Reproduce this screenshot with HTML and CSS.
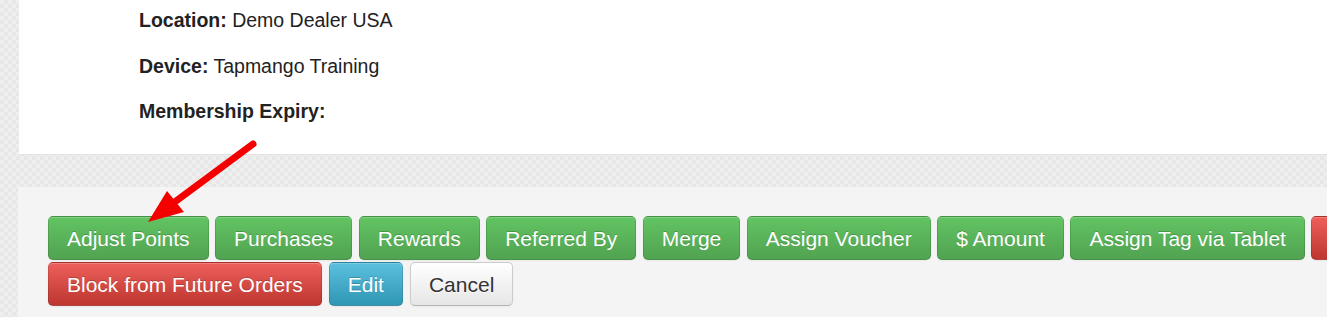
FILE: index.html
```html
<!DOCTYPE html>
<html>
<head>
<meta charset="utf-8">
<link rel="stylesheet" href="styles.css">
</head>
<body>
<div class="page">
  <section class="info-panel">
    <p class="info-line"><b>Location:</b> Demo Dealer USA</p>
    <p class="info-line"><b>Device:</b> Tapmango Training</p>
    <p class="info-line"><b>Membership Expiry:</b></p>
  </section>
  <section class="action-panel">
    <div class="btn-row">
      <button class="btn btn-success">Adjust Points</button>
      <button class="btn btn-success">Purchases</button>
      <button class="btn btn-success">Rewards</button>
      <button class="btn btn-success">Referred By</button>
      <button class="btn btn-success">Merge</button>
      <button class="btn btn-success">Assign Voucher</button>
      <button class="btn btn-success">$ Amount</button>
      <button class="btn btn-success">Assign Tag via Tablet</button>
      <button class="btn btn-danger">Delete</button>
    </div>
    <div class="btn-row">
      <button class="btn btn-danger">Block from Future Orders</button>
      <button class="btn btn-info">Edit</button>
      <button class="btn btn-default">Cancel</button>
    </div>
  </section>
</div>
<svg class="arrow" width="1327" height="317" viewBox="0 0 1327 317">
  <line x1="253" y1="144" x2="172" y2="204" stroke="#f50000" stroke-width="7" stroke-linecap="round"/>
  <polygon points="148,222 167,191 184,212" fill="#f50000"/>
</svg>
</body>
</html>
```

FILE: styles.css
```css
html, body {
  margin: 0;
  padding: 0;
}
body {
  width: 1327px;
  height: 317px;
  overflow: hidden;
  position: relative;
  font-family: "Liberation Sans", Arial, sans-serif;
  color: #222;
  background-color: #eeeeee;
  background-image:
    linear-gradient(45deg, #e7e7e7 25%, transparent 25%, transparent 75%, #e7e7e7 75%),
    linear-gradient(45deg, #e7e7e7 25%, transparent 25%, transparent 75%, #e7e7e7 75%);
  background-size: 8px 8px;
  background-position: 0 0, 4px 4px;
}
.page {
  margin-left: 18px;
  display: flex;
  flex-direction: column;
}
.info-panel {
  background: #fff;
  height: 155px;
  box-sizing: border-box;
  padding: 6px 0 0 120px;
  margin-left: 1px;
  border-bottom: 1px solid #e2e2e2;
  margin-bottom: 32px;
}
.info-line {
  margin: 0 0 17.5px 0;
  font-size: 19.5px;
  line-height: 28px;
}
.info-line b {
  font-weight: bold;
}
.action-panel {
  background: #f4f4f4;
  height: 130px;
  padding: 29px 0 0 30px;
  display: flex;
  flex-direction: column;
  gap: 2px;
}
.btn-row {
  display: flex;
  gap: 6.5px;
  flex-wrap: nowrap;
}
.btn-row + .btn-row {
  gap: 7px;
}
.btn {
  flex: none;
  font-family: "Liberation Sans", Arial, sans-serif;
  font-size: 21px;
  line-height: 28px;
  padding: 8px 18px 6px;
  border: 1px solid rgba(0,0,0,0.12);
  border-bottom-color: rgba(0,0,0,0.25);
  border-radius: 5px;
  color: #fff;
  text-shadow: 0 -1px 0 rgba(0,0,0,0.2);
  box-shadow: inset 0 1px 0 rgba(255,255,255,0.2), 0 1px 2px rgba(0,0,0,0.05);
  cursor: pointer;
}
.btn-success {
  background: linear-gradient(#62c462, #51a351);
}
.btn-danger {
  background: linear-gradient(#ee5f5b, #bd362f);
}
.btn-info {
  background: linear-gradient(#5bc0de, #2f96b4);
}
.btn-default {
  color: #333;
  text-shadow: 0 1px 1px rgba(255,255,255,0.75);
  background: linear-gradient(#ffffff, #e6e6e6);
  border-color: #ccc;
  border-bottom-color: #b3b3b3;
}
.arrow {
  position: absolute;
  left: 0;
  top: 0;
  pointer-events: none;
}
```
